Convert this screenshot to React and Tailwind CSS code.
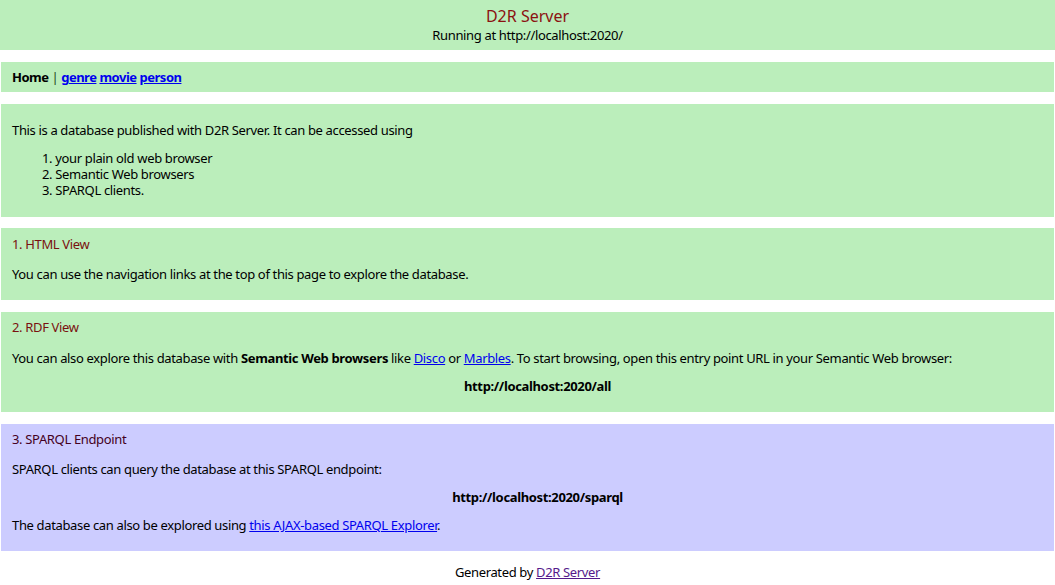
export default function App() {
  return (
    <div className="w-[1055px] h-[585px] bg-white text-[13px] leading-[16px] text-black font-['Noto_Sans',sans-serif] tracking-[-0.35px] overflow-hidden">
      <div className="h-[50px] bg-[#bbeebb] flex flex-col items-center pt-[6px]">
        <div className="text-[16px] leading-[20px] text-[#8b1111] tracking-normal">D2R Server</div>
        <div className="leading-[16px] mt-[1px]">Running at http://localhost:2020/</div>
      </div>
      <div className="ml-[1px] mr-[1px] mt-[12px] h-[30px] bg-[#bbeebb] px-[11px] flex items-center font-bold tracking-[-0.5px]">
        <span>Home</span>
        <span className="font-normal mx-[3px] text-[#224422]">|</span>
        <a className="text-[#0000ee] underline">genre</a>
        <a className="text-[#0000ee] underline ml-[3px]">movie</a>
        <a className="text-[#0000ee] underline ml-[3px]">person</a>
      </div>
      <div className="ml-[1px] mr-[1px] mt-[12px] h-[113px] bg-[#bbeebb] px-[11px] pt-[18px]">
        <p>This is a database published with D2R Server. It can be accessed using</p>
        <ol className="mt-[12px] pl-[30px]">
          <li>1. your plain old web browser</li>
          <li>2. Semantic Web browsers</li>
          <li>3. SPARQL clients.</li>
        </ol>
      </div>
      <div className="ml-[1px] mr-[1px] mt-[11px] h-[72px] bg-[#bbeebb] px-[11px] pt-[8px]">
        <div className="text-[#7a1010]">1. HTML View</div>
        <p className="mt-[14px]">You can use the navigation links at the top of this page to explore the database.</p>
      </div>
      <div className="ml-[1px] mr-[1px] mt-[12px] h-[100px] bg-[#bbeebb] px-[11px] pt-[7px]">
        <div className="text-[#7a1010]">2. RDF View</div>
        <p className="mt-[15px]">
          You can also explore this database with <b>Semantic Web browsers</b> like{" "}
          <a className="text-[#0000ee] underline">Disco</a> or{" "}
          <a className="text-[#0000ee] underline">Marbles</a>. To start browsing, open this entry point URL in your Semantic Web browser:
        </p>
        <p className="mt-[12px] pl-[20px] text-center font-bold">http://localhost:2020/all</p>
      </div>
      <div className="ml-[1px] mr-[1px] mt-[12px] h-[127px] bg-[#ccccff] px-[11px] pt-[7px]">
        <div className="text-[#440022]">3. SPARQL Endpoint</div>
        <p className="mt-[14px]">SPARQL clients can query the database at this SPARQL endpoint:</p>
        <p className="mt-[12px] pl-[20px] text-center font-bold">http://localhost:2020/sparql</p>
        <p className="mt-[12px]">
          The database can also be explored using{" "}
          <a className="text-[#0000ee] underline">this AJAX-based SPARQL Explorer</a>.
        </p>
      </div>
      <div className="mt-[13px] text-center">
        Generated by <a className="text-[#551a8b] underline">D2R Server</a>
      </div>
    </div>
  );
}
